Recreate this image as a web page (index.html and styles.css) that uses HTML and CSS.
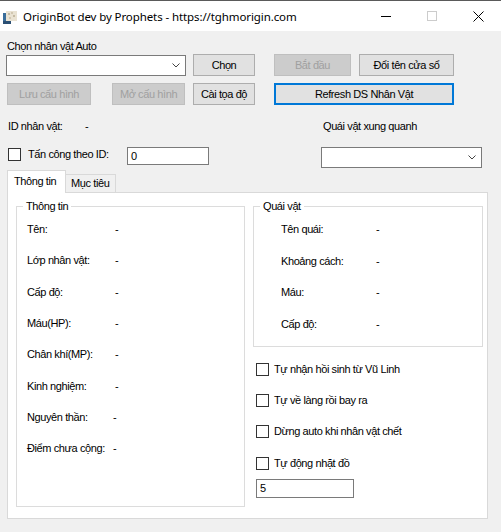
FILE: index.html
```html
<!DOCTYPE html>
<html>
<head>
    <meta charset="utf-8">
    <title>OriginBot</title>
    <link rel="stylesheet" href="styles.css">
</head>
<body>
    <div class="titlebar">
        <svg class="app-icon" width="14" height="14" viewBox="0 0 14 14">
            <rect x="3" y="1" width="11" height="10" fill="#e9e2d2"/>
            <circle cx="6" cy="4" r="1" fill="#b9ad92"/>
            <circle cx="9" cy="3" r="1" fill="#c8bea6"/>
            <circle cx="11" cy="6" r="1" fill="#b9ad92"/>
            <circle cx="7" cy="8" r="1" fill="#c8bea6"/>
            <rect x="0" y="3" width="3" height="11" fill="#3a6d9a"/>
            <rect x="0" y="11" width="8" height="3" fill="#2b4f73"/>
        </svg>
        <span class="title">OriginBot dev by Prophets - https://tghmorigin.com</span>
        <div class="controls">
            <span class="ctl"><svg width="10" height="10" viewBox="0 0 10 10"><path d="M0 5.5H10" stroke="#000" stroke-width="1"/></svg></span>
            <span class="ctl"><svg width="10" height="10" viewBox="0 0 10 10"><rect x="0.5" y="0.5" width="9" height="9" fill="none" stroke="#cccccc"/></svg></span>
            <span class="ctl"><svg width="11" height="11" viewBox="0 0 11 11"><path d="M0.5 0.5L10.5 10.5M10.5 0.5L0.5 10.5" stroke="#000" stroke-width="1"/></svg></span>
        </div>
    </div>

    <div class="client">
        <div class="caption">Chọn nhân vật Auto</div>

        <div class="row row-top">
            <div class="combo combo-char">
                <svg width="8" height="5" viewBox="0 0 8 5"><path d="M0.5 0.5L4 4L7.5 0.5" fill="none" stroke="#444"/></svg>
            </div>
            <button class="btn btn-chon">Chọn</button>
            <button class="btn btn-start" disabled>Bắt đầu</button>
            <button class="btn btn-rename">Đổi tên cửa sổ</button>
        </div>

        <div class="row row-second">
            <button class="btn btn-save" disabled>Lưu cấu hình</button>
            <button class="btn btn-open" disabled>Mở cấu hình</button>
            <button class="btn btn-coord">Cài tọa độ</button>
            <button class="btn btn-refresh">Refresh DS Nhân Vật</button>
        </div>

        <div class="row-id">
            <span>ID nhân vật:</span>
            <span>-</span>
            <span>Quái vật xung quanh</span>
        </div>

        <div class="row row-attack">
            <span class="check"></span>
            <span class="attack-label">Tấn công theo ID:</span>
            <div class="textbox id-box">0</div>
            <div class="combo combo-mob">
                <svg width="8" height="5" viewBox="0 0 8 5"><path d="M0.5 0.5L4 4L7.5 0.5" fill="none" stroke="#444"/></svg>
            </div>
        </div>

        <div class="tabs">
            <div class="tab active">Thông tin</div>
            <div class="tab">Mục tiêu</div>
        </div>

        <div class="tab-page">
            <fieldset class="group group-info">
                <legend>Thông tin</legend>
                <div class="fields">
                    <span>Tên:</span><span>-</span>
                    <span>Lớp nhân vật:</span><span>-</span>
                    <span>Cấp độ:</span><span>-</span>
                    <span>Máu(HP):</span><span>-</span>
                    <span>Chân khí(MP):</span><span>-</span>
                    <span>Kinh nghiệm:</span><span>-</span>
                    <span>Nguyên thần:</span><span class="nudge">-</span>
                    <span>Điểm chưa cộng:</span><span class="nudge">-</span>
                </div>
            </fieldset>

            <div class="side">
                <fieldset class="group group-mob">
                    <legend>Quái vật</legend>
                    <div class="fields">
                        <span>Tên quái:</span><span>-</span>
                        <span>Khoảng cách:</span><span>-</span>
                        <span>Máu:</span><span>-</span>
                        <span>Cấp độ:</span><span>-</span>
                    </div>
                </fieldset>

                <div class="check-list">
                    <div class="check-row"><span class="check"></span><span>Tự nhận hồi sinh từ Vũ Linh</span></div>
                    <div class="check-row"><span class="check"></span><span>Tự về làng rồi bay ra</span></div>
                    <div class="check-row"><span class="check"></span><span>Dừng auto khi nhân vật chết</span></div>
                    <div class="check-row"><span class="check"></span><span>Tự động nhặt đồ</span></div>
                </div>
                <div class="textbox num-box">5</div>
            </div>
        </div>
    </div>
</body>
</html>
```

FILE: styles.css
```css
* {
    margin: 0;
    padding: 0;
    box-sizing: border-box;
}

body {
    width: 501px;
    height: 532px;
    overflow: hidden;
    background: #f0f0f0;
    color: #000;
    font-family: 'Liberation Sans', Arial, sans-serif;
    font-size: 11px;
    letter-spacing: -0.4px;
    line-height: 13px;
}

/* title bar */
.titlebar {
    height: 31px;
    border-top: 1px solid #5a5a5a;
    background: #fff;
    display: flex;
    align-items: center;
}

.app-icon {
    margin-left: 3px;
    margin-top: 1px;
}

.title {
    flex: 1;
    margin-left: 6px;
    font-family: 'Noto Sans', sans-serif;
    font-size: 11.5px;
    letter-spacing: -0.1px;
    white-space: nowrap;
}

.controls {
    display: flex;
    align-self: stretch;
}

.ctl {
    width: 46px;
    display: flex;
    align-items: center;
    justify-content: center;
}

/* client area */
.client {
    padding-top: 9px;
}

.caption {
    margin-left: 7px;
    height: 13px;
}

.row {
    display: flex;
    align-items: flex-start;
}

.row-top {
    margin-top: 1px;
    padding-left: 6px;
}

.row-second {
    margin-top: 7px;
    padding-left: 7px;
}

.combo {
    height: 21px;
    background: #fff;
    border: 1px solid #7a7a7a;
    display: flex;
    align-items: center;
    justify-content: flex-end;
    padding-right: 5px;
}

.combo-char {
    width: 180px;
    margin-top: 1px;
}

.btn {
    height: 22px;
    background: #e1e1e1;
    border: 1px solid #adadad;
    font: inherit;
    letter-spacing: inherit;
    color: #000;
}

.btn:disabled {
    background: #cccccc;
    border-color: #bfbfbf;
    color: #a0a0a0;
}

.btn-chon { width: 62px; margin-left: 7px; }
.btn-start { width: 77px; margin-left: 19px; }
.btn-rename { width: 95px; margin-left: 8px; }
.btn-save { width: 84px; }
.btn-open { width: 73px; margin-left: 21px; }
.btn-coord { width: 62px; margin-left: 8px; }

.btn-refresh {
    width: 180px;
    margin-left: 19px;
    border-color: #0078d7;
    box-shadow: inset 0 0 0 1px #0078d7;
}

.row-id {
    margin-top: 15px;
    padding-left: 8px;
    height: 13px;
    display: grid;
    grid-template-columns: 77px 238px auto;
}

.row-attack {
    margin-top: 14px;
    padding-left: 8px;
}

.check {
    width: 13px;
    height: 13px;
    border: 1px solid #333;
    background: #fff;
    flex: none;
}

.row-attack .check {
    margin-top: 1px;
}

.attack-label {
    width: 99px;
    margin-left: 7px;
    margin-top: 1px;
}

.textbox {
    background: #fff;
    border: 1px solid #7a7a7a;
    padding-left: 3px;
}

.id-box {
    width: 82px;
    height: 18px;
    line-height: 16px;
}

.combo-mob {
    width: 161px;
    margin-left: 112px;
}

/* tabs */
.tabs {
    margin-top: 2px;
    padding-left: 7px;
    height: 22px;
    display: flex;
    align-items: flex-end;
}

.tab {
    width: 50px;
    height: 18px;
    line-height: 17px;
    padding-left: 5px;
    border: 1px solid #d9d9d9;
    border-bottom: none;
    border-left: none;
    background: #f0f0f0;
}

.tab.active {
    width: 59px;
    height: 23px;
    line-height: 21px;
    padding-left: 6px;
    margin-bottom: -1px;
    border-left: 1px solid #d9d9d9;
    background: #fff;
    position: relative;
    z-index: 1;
}

.tab-page {
    margin-left: 7px;
    width: 481px;
    height: 327px;
    background: #fff;
    border: 1px solid #d9d9d9;
    padding: 7px 0 0 8px;
    display: flex;
    align-items: flex-start;
    gap: 8px;
}

.group {
    border: 1px solid #dcdcdc;
    min-inline-size: 0;
}

.group legend {
    margin-left: 6px;
    padding: 0 3px;
    line-height: 13px;
}

.group-info {
    width: 229px;
    height: 307px;
}

.group-mob {
    width: 230px;
    height: 147px;
}

.fields {
    display: grid;
    grid-template-columns: 88px auto;
    grid-auto-rows: 31.3px;
    align-items: center;
    padding: 1px 0 0 10px;
}

.group-mob .fields {
    grid-template-columns: 95px auto;
    grid-auto-rows: 31.6px;
    padding-left: 27px;
}

.nudge {
    margin-left: -2px;
}

.side {
    width: 230px;
    display: flex;
    flex-direction: column;
}

.check-list {
    margin-top: 6.5px;
}

.check-row {
    height: 31.3px;
    display: flex;
    align-items: center;
    padding-left: 3px;
}

.check-row .check {
    margin-right: 5px;
}

.num-box {
    width: 98px;
    height: 19px;
    line-height: 17px;
    margin-left: 3px;
}
```
